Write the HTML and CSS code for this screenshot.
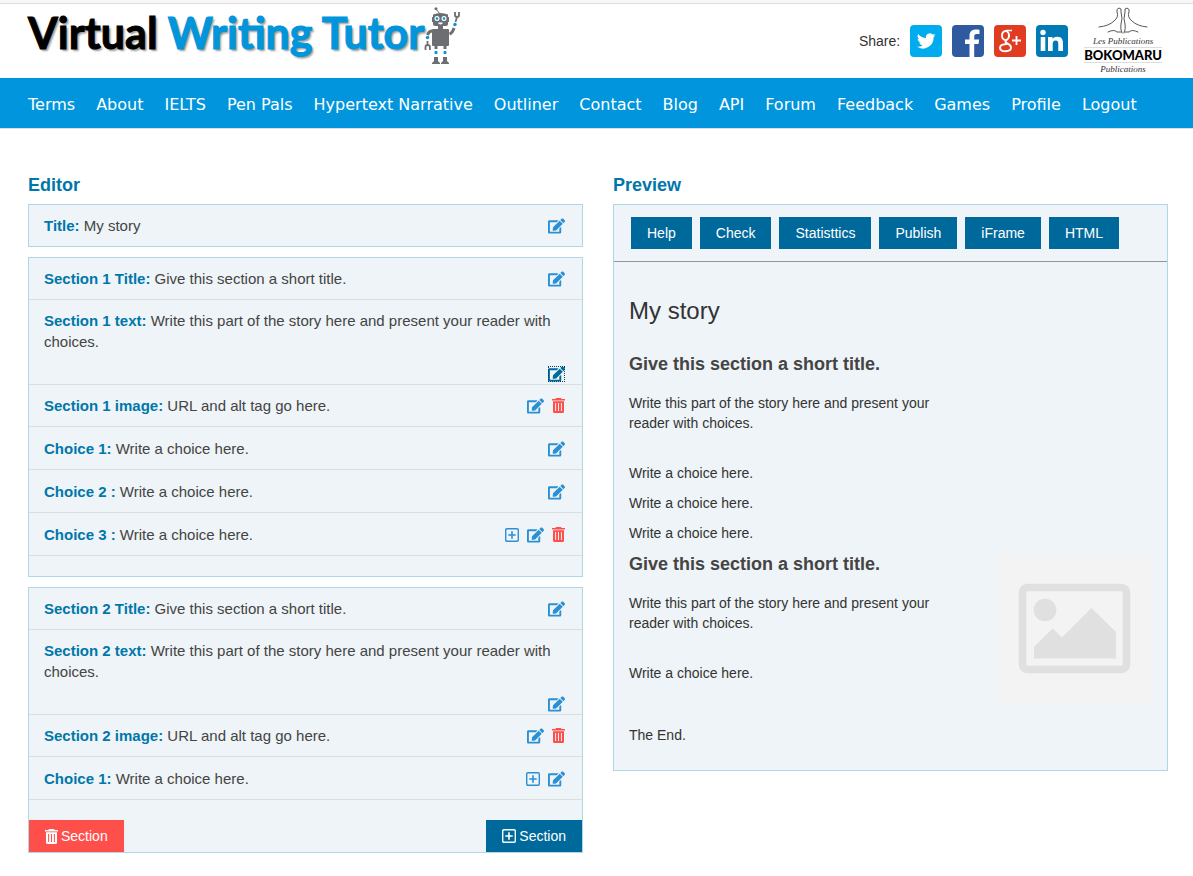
FILE: index.html
```html
<!DOCTYPE html>
<html lang="en">
<head>
  <meta charset="UTF-8">
  <meta name="viewport" content="width=device-width, initial-scale=1.0">
  <title>Virtual Writing Tutor - Hypertext Narrative</title>
  <link rel="stylesheet" href="styles.css">
</head>
<body>

  <!-- Shared icons -->
  <svg class="sprite" aria-hidden="true">
    <symbol id="edit" viewBox="0 0 576 512">
      <path d="M402.6 83.2l90.2 90.2c3.8 3.8 3.8 10 0 13.8L274.4 405.6l-92.8 10.3c-12.4 1.4-22.9-9.1-21.5-21.5l10.3-92.8L388.8 83.2c3.8-3.8 10-3.8 13.8 0zm162-22.9l-48.8-48.8c-15.2-15.2-39.9-15.2-55.2 0l-35.4 35.4c-3.8 3.8-3.8 10 0 13.8l90.2 90.2c3.8 3.8 10 3.8 13.8 0l35.4-35.4c15.2-15.3 15.2-40 0-55.2zM384 346.2V448H64V128h229.8c3.2 0 6.2-1.3 8.5-3.5l40-40c7.6-7.6 2.2-20.5-8.5-20.5H48C21.5 64 0 85.5 0 112v352c0 26.5 21.5 48 48 48h352c26.5 0 48-21.5 48-48V306.2c0-10.7-12.9-16-20.5-8.5l-40 40c-2.2 2.3-3.5 5.3-3.5 8.5z"/>
    </symbol>
    <symbol id="trash" viewBox="0 0 13 15">
      <path fill-rule="evenodd" d="M4 0h5l.6 1H13v1.500H0V1h3.400zM1 3.300h11V13.500a1.500 1.500 0 0 1-1.500 1.500h-8A1.500 1.500 0 0 1 1 13.500zM3.100 5v8h1V5zM6 5v8h1V5zM8.900 5v8h1V5z"/>
    </symbol>
    <symbol id="plus" viewBox="0 0 14 14">
      <rect x="0.700" y="0.700" width="12.600" height="12.600" rx="1.200" fill="none" stroke="currentColor" stroke-width="1.400"/>
      <path d="M6.200 3.300h1.600v2.900h2.900v1.600H7.800v2.900H6.200V7.800H3.300V6.200h2.900z"/>
    </symbol>
  </svg>

  <header class="site-header">
    <a class="logo" href="#">
      <span class="logo-text"><span class="logo-dark">Virtual</span> Writing Tutor</span>
      <svg class="robot" viewBox="0 0 36 58" aria-hidden="true">
        <g fill="none" stroke="#6d6e71">
          <path d="M12 2l4 5" stroke-width="1"/>
          <path d="M8 24q-3 0-4.500 4M25.500 27q3-1 4.500-6" stroke-width="3"/>
          <path d="M31 5v3q0 2 2 2t2-2V5M33 10l-1.500 5" stroke-width="1.800"/>
          <path d="M1.500 43v-3q0-2 2.200-2t2.200 2v3M3.500 38v-4" stroke-width="1.800"/>
        </g>
        <g fill="#6d6e71">
          <circle cx="12" cy="1.800" r="1.500"/>
          <path d="M9 7.500q7.500-3 15 0V10h1v5h-1v2q0 2-2 2H11q-2 0-2-2v-2H8v-5h1z"/>
          <rect x="14" y="19" width="5" height="3"/>
          <rect x="8" y="22" width="17" height="17" rx="1"/>
          <path d="M10 50h4v4l2 2v1H8v-1l2-2zM19 50h4v4l2 2v1h-8v-1l2-2z"/>
          <rect x="10.500" y="39" width="3" height="3"/>
          <rect x="19.500" y="39" width="3" height="3"/>
        </g>
        <g fill="#fff">
          <circle cx="13" cy="11.500" r="2.500"/>
          <circle cx="20" cy="11.500" r="2.500"/>
          <path d="M14 15.500h5q-.5 2-2.500 2t-2.500-2z"/>
        </g>
        <g fill="#0095dc">
          <circle cx="13" cy="11.500" r="1.300"/>
          <circle cx="20" cy="11.500" r="1.300"/>
          <circle cx="3.500" cy="30.500" r="1.700"/>
          <circle cx="31" cy="17.500" r="1.700"/>
          <rect x="10.500" y="44" width="3" height="3" rx="1"/>
          <rect x="19.500" y="44" width="3" height="3" rx="1"/>
        </g>
      </svg>
    </a>

    <div class="share">
      <span class="share-label">Share:</span>
      <a href="#" aria-label="Twitter">
        <svg viewBox="0 0 32 32"><rect width="32" height="32" rx="4" fill="#00aced"/><path fill="#fff" d="M25.500 10.200a7.500 7.500 0 0 1-2.200.600 3.800 3.800 0 0 0 1.700-2.100 7.600 7.600 0 0 1-2.400.9 3.800 3.800 0 0 0-6.500 3.500 10.800 10.800 0 0 1-7.900-4 3.800 3.800 0 0 0 1.200 5.100 3.800 3.800 0 0 1-1.700-.5c0 1.900 1.300 3.400 3 3.800a3.800 3.800 0 0 1-1.700.1 3.800 3.800 0 0 0 3.600 2.600A7.700 7.700 0 0 1 7 21.800a10.800 10.800 0 0 0 16.600-9.600 7.700 7.700 0 0 0 1.900-2z"/></svg>
      </a>
      <a href="#" aria-label="Facebook">
        <svg viewBox="0 0 32 32"><rect width="32" height="32" rx="4" fill="#2f5a9f"/><path fill="#fff" d="M17.500 32V19H13v-4.500h4.500V11c0-4.500 2.500-6.500 6.200-6.500 1.800 0 3 .1 3.800.2v4.200h-2.800c-2 0-2.500 1-2.500 2.500v3.100h5l-.7 4.500h-4.300v13z"/></svg>
      </a>
      <a href="#" aria-label="Google Plus">
        <svg viewBox="0 0 32 32"><rect width="32" height="32" rx="4" fill="#e13b22"/><g fill="none" stroke="#fff"><ellipse cx="11.500" cy="10.500" rx="3.500" ry="4.500" stroke-width="2"/><path d="M12 5.500h6" stroke-width="1.500"/><path d="M13 14.500q-3 2 0 3.700 4 2 4 4.300 0 3.700-5.500 3.700T6 22.700q0-3.500 7-3.700" stroke-width="1.900"/><path d="M22.500 11v9M18 15.500h9" stroke-width="1.800"/></g></svg>
      </a>
      <a href="#" aria-label="LinkedIn">
        <svg viewBox="0 0 32 32"><rect width="32" height="32" rx="4" fill="#0079b5"/><g fill="#fff"><circle cx="7" cy="7.500" r="2.700"/><path d="M4.700 12h4.600v14H4.700zM12 12h4.500v2c1-1.500 2.500-2.300 4.800-2.300 4.500 0 5.700 2.800 5.700 6.800V26h-4.700v-7c0-2-.4-3.500-2.600-3.500s-3 1.500-3 3.500v7H12z"/></g></svg>
      </a>
      <a class="publisher" href="#">
        <svg class="feet" viewBox="0 0 52 28" aria-hidden="true"><g fill="none" stroke="#555" stroke-width="1" stroke-linecap="round"><path d="M2 20q10-1 15-6 5-4 3-9-1-3 2-4 3 0 2 4 2 7 0 12-1 5 1 9M11 25q6-3 9 0h4"/><path d="M50 20q-10-1-15-6-5-4-3-9 1-3-2-4-3 0-2 4-2 7 0 12 1 5-1 9M41 25q-6-3-9 0h-4"/></g></svg>
        <em>Les Publications</em>
        <strong>BOKOMARU</strong>
        <em>Publications</em>
      </a>
    </div>
  </header>

  <nav class="main-nav">
    <a href="#">Terms</a>
    <a href="#">About</a>
    <a href="#">IELTS</a>
    <a href="#">Pen Pals</a>
    <a href="#">Hypertext Narrative</a>
    <a href="#">Outliner</a>
    <a href="#">Contact</a>
    <a href="#">Blog</a>
    <a href="#">API</a>
    <a href="#">Forum</a>
    <a href="#">Feedback</a>
    <a href="#">Games</a>
    <a href="#">Profile</a>
    <a href="#">Logout</a>
  </nav>

  <main class="columns">
    <section class="editor">
      <h2>Editor</h2>

      <div class="box">
        <div class="row">
          <p><strong>Title:</strong> My story</p>
          <div class="actions"><button aria-label="Edit title"><svg class="icon-edit"><use href="#edit"/></svg></button></div>
        </div>
      </div>

      <div class="box">
        <div class="row">
          <p><strong>Section 1 Title:</strong> Give this section a short title.</p>
          <div class="actions"><button aria-label="Edit section title"><svg class="icon-edit"><use href="#edit"/></svg></button></div>
        </div>
        <div class="row row-text">
          <p><strong>Section 1 text:</strong> Write this part of the story here and present your reader with choices.</p>
          <div class="actions"><button class="focused" aria-label="Edit section text"><svg class="icon-edit"><use href="#edit"/></svg></button></div>
        </div>
        <div class="row">
          <p><strong>Section 1 image:</strong> URL and alt tag go here.</p>
          <div class="actions">
            <button aria-label="Edit image"><svg class="icon-edit"><use href="#edit"/></svg></button>
            <button class="delete" aria-label="Delete image"><svg class="icon-trash"><use href="#trash"/></svg></button>
          </div>
        </div>
        <div class="row row-choice">
          <p><strong>Choice 1:</strong> Write a choice here.</p>
          <div class="actions"><button aria-label="Edit choice"><svg class="icon-edit"><use href="#edit"/></svg></button></div>
        </div>
        <div class="row row-choice">
          <p><strong>Choice 2 :</strong> Write a choice here.</p>
          <div class="actions"><button aria-label="Edit choice"><svg class="icon-edit"><use href="#edit"/></svg></button></div>
        </div>
        <div class="row row-choice">
          <p><strong>Choice 3 :</strong> Write a choice here.</p>
          <div class="actions">
            <button aria-label="Add choice"><svg class="icon-plus"><use href="#plus"/></svg></button>
            <button aria-label="Edit choice"><svg class="icon-edit"><use href="#edit"/></svg></button>
            <button class="delete" aria-label="Delete choice"><svg class="icon-trash"><use href="#trash"/></svg></button>
          </div>
        </div>
        <div class="box-footer"></div>
      </div>

      <div class="box">
        <div class="row">
          <p><strong>Section 2 Title:</strong> Give this section a short title.</p>
          <div class="actions"><button aria-label="Edit section title"><svg class="icon-edit"><use href="#edit"/></svg></button></div>
        </div>
        <div class="row row-text">
          <p><strong>Section 2 text:</strong> Write this part of the story here and present your reader with choices.</p>
          <div class="actions"><button aria-label="Edit section text"><svg class="icon-edit"><use href="#edit"/></svg></button></div>
        </div>
        <div class="row">
          <p><strong>Section 2 image:</strong> URL and alt tag go here.</p>
          <div class="actions">
            <button aria-label="Edit image"><svg class="icon-edit"><use href="#edit"/></svg></button>
            <button class="delete" aria-label="Delete image"><svg class="icon-trash"><use href="#trash"/></svg></button>
          </div>
        </div>
        <div class="row row-choice">
          <p><strong>Choice 1:</strong> Write a choice here.</p>
          <div class="actions">
            <button aria-label="Add choice"><svg class="icon-plus"><use href="#plus"/></svg></button>
            <button aria-label="Edit choice"><svg class="icon-edit"><use href="#edit"/></svg></button>
          </div>
        </div>
        <div class="box-footer">
          <button class="btn btn-delete"><svg class="icon-trash"><use href="#trash"/></svg>Section</button>
          <button class="btn"><svg class="icon-plus"><use href="#plus"/></svg>Section</button>
        </div>
      </div>
    </section>

    <section class="preview">
      <h2>Preview</h2>
      <div class="box">
        <div class="toolbar">
          <button class="btn">Help</button>
          <button class="btn">Check</button>
          <button class="btn">Statisttics</button>
          <button class="btn">Publish</button>
          <button class="btn">iFrame</button>
          <button class="btn">HTML</button>
        </div>
        <article class="story">
          <h1>My story</h1>
          <div class="story-section">
            <div class="story-text">
              <h3>Give this section a short title.</h3>
              <p>Write this part of the story here and present your reader with choices.</p>
              <ul>
                <li>Write a choice here.</li>
                <li>Write a choice here.</li>
                <li>Write a choice here.</li>
              </ul>
            </div>
          </div>
          <div class="story-section">
            <div class="story-text">
              <h3>Give this section a short title.</h3>
              <p>Write this part of the story here and present your reader with choices.</p>
              <ul>
                <li>Write a choice here.</li>
              </ul>
            </div>
            <svg class="placeholder" viewBox="0 0 154 152" role="img" aria-label="Section image">
              <rect width="154" height="152" fill="#f3f3f3"/>
              <rect x="24.500" y="34.500" width="104" height="82" rx="5" fill="none" stroke="#e0e0e0" stroke-width="7.500"/>
              <circle cx="47" cy="57" r="11.300" fill="#e0e0e0"/>
              <path d="M36 105.500V94l18.500-18.500 9.500 9L93.500 55l24.500 24v26.500z" fill="#e0e0e0"/>
            </svg>
          </div>
          <p class="the-end">The End.</p>
        </article>
      </div>
    </section>
  </main>

</body>
</html>
```
FILE: styles.css
```css
* {
  box-sizing: border-box;
}

body {
  margin: 0;
  font-family: "Liberation Sans", Arial, sans-serif;
  font-size: 15px;
  line-height: 21px;
  color: #444;
  background: #fff;
  border-top: 3px solid #f7f7f7;
}

h1, h2, h3, p, ul {
  margin: 0;
  padding: 0;
}

a {
  text-decoration: none;
}

button {
  font-family: inherit;
  border: none;
  padding: 0;
  background: none;
  cursor: pointer;
}

svg {
  display: block;
  fill: currentColor;
}

.sprite {
  display: none;
}

/* Header */
.site-header {
  display: flex;
  justify-content: space-between;
  height: 75px;
  padding: 0 31px 0 28px;
  border-top: 1px solid #ddd;
}

.logo {
  display: flex;
  align-items: flex-start;
  padding-top: 3px;
}

.logo-text {
  font-family: Lato, sans-serif;
  font-size: 43px;
  font-weight: 700;
  line-height: 52px;
  color: #0095dc;
  -webkit-text-stroke: 1px currentColor;
  text-shadow: 2px 2px 2px rgba(0, 0, 0, 0.4);
}

.logo-dark {
  color: #000;
}

.robot {
  width: 36px;
  height: 58px;
}

.share {
  display: flex;
  align-items: center;
  gap: 10px;
}

.share-label {
  font-size: 14px;
  color: #333;
}

.share svg {
  width: 32px;
  height: 32px;
}

.publisher {
  display: flex;
  flex-direction: column;
  align-items: center;
  margin-left: 6px;
  color: #333;
}

.publisher .feet {
  width: 52px;
  height: 28px;
}

.publisher em {
  font-family: "Liberation Serif", serif;
  font-size: 9px;
  line-height: 12px;
}

.publisher strong {
  font-family: Lato, sans-serif;
  font-size: 13px;
  font-weight: 900;
  line-height: 14px;
  color: #000;
  border-top: 1px solid #ddd;
  border-bottom: 1px solid #ddd;
}

/* Navigation */
.main-nav {
  display: flex;
  flex-wrap: wrap;
  gap: 0 21px;
  padding: 3px 28px 0;
  background: #0095dc;
  border-bottom: 1px solid #ddd;
}

.main-nav a {
  font-family: "DejaVu Sans", Verdana, sans-serif;
  font-size: 16px;
  line-height: 47px;
  color: #fff;
}

/* Editor and preview */
.columns {
  display: grid;
  grid-template-columns: 1fr 1fr;
  align-items: start;
  gap: 30px;
  padding: 45px 25px 23px 28px;
}

h2 {
  font-size: 18px;
  line-height: 22px;
  margin-bottom: 8px;
  color: #0077aa;
}

.box {
  background: #eef4f7;
  border: 1px solid #add8e6;
}

.box + .box {
  margin-top: 10px;
}

.row {
  display: flex;
  justify-content: space-between;
  align-items: center;
  padding: 10px 17px 10px 15px;
  border-bottom: 1px solid #dcdfe1;
}

.row:last-child {
  border-bottom: none;
}

.row strong {
  color: #0077aa;
}

.row-text {
  flex-direction: column;
  align-items: stretch;
  gap: 14px;
  padding-bottom: 2px;
}

.row-choice {
  padding-top: 11px;
}

.actions {
  display: flex;
  justify-content: flex-end;
  align-items: center;
  gap: 8px;
}

.actions button {
  color: #2a8fd3;
}

.actions .delete {
  color: #ff4f4b;
}

.actions .focused {
  color: #00699c;
  outline: 1px dotted #00466b;
  outline-offset: -1px;
}

.icon-edit {
  width: 17px;
  height: 16px;
}

.icon-trash {
  width: 13px;
  height: 15px;
}

.icon-plus {
  width: 14px;
  height: 14px;
}

.box-footer {
  display: flex;
  justify-content: space-between;
  padding-top: 20px;
}

.btn {
  display: flex;
  align-items: center;
  gap: 3px;
  height: 32px;
  padding: 0 16px;
  font-size: 14px;
  color: #fff;
  background: #00699c;
}

.btn-delete {
  background: #ff4f4b;
}

.toolbar {
  display: flex;
  flex-wrap: wrap;
  gap: 8px;
  padding: 12px 17px;
  border-bottom: 1px solid #8f989d;
}

.story {
  padding: 35px 15px 25px;
  font-size: 14px;
  line-height: 20px;
  color: #333;
}

.story h1 {
  font-size: 24px;
  font-weight: 400;
  line-height: 28px;
  margin-bottom: 28px;
}

.story h3 {
  font-size: 18px;
  line-height: 22px;
  margin-bottom: 18px;
  color: #444;
}

.story-section {
  display: flex;
  justify-content: space-between;
  align-items: flex-start;
}

.story-section + .story-section {
  margin-top: 10px;
}

.story-text {
  width: 65%;
}

.story ul {
  display: grid;
  gap: 10px;
  margin-top: 30px;
  list-style: none;
}

.placeholder {
  width: 154px;
  height: 152px;
}

.the-end {
  margin-top: 20px;
}
```
